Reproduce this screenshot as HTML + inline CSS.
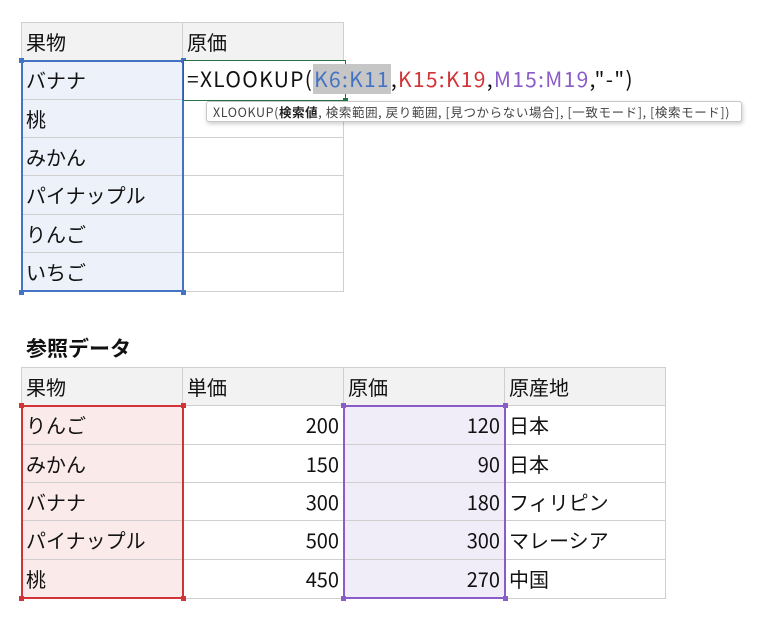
<!DOCTYPE html>
<html><head><meta charset="utf-8"><style>
body{margin:0;width:768px;height:624px;background:#fff;position:relative;overflow:hidden;font-family:"Noto Sans CJK JP","Liberation Sans",sans-serif;color:#111;}
.c{position:absolute;box-sizing:border-box;border-right:1px solid #cfcfcf;border-bottom:1px solid #cfcfcf;font-size:20px;line-height:1;display:flex;align-items:center;padding:0 4px;white-space:nowrap;}
.h{background:#f2f2f2;}
.r{justify-content:flex-end;}
.bl{background:#edf1f9}.rd{background:#fbeaea}.pu{background:#f0edf8}
.sel{position:absolute;box-sizing:border-box;}
.hd{position:absolute;width:5px;height:5px;}
</style></head><body>
<div style="position:absolute;left:21px;top:22px;width:323px;height:1px;background:#cfcfcf"></div>
<div style="position:absolute;left:21px;top:22px;width:1px;height:270px;background:#cfcfcf"></div>
<div class="c h" style="left:22px;top:23px;width:161px;height:38px">果物</div>
<div class="c h" style="left:183px;top:23px;width:161px;height:38px">原価</div>
<div class="c bl" style="left:22px;top:61px;width:161px;height:39px">バナナ</div>
<div class="c" style="left:183px;top:61px;width:161px;height:39px"></div>
<div class="c bl" style="left:22px;top:100px;width:161px;height:38px">桃</div>
<div class="c" style="left:183px;top:100px;width:161px;height:38px"></div>
<div class="c bl" style="left:22px;top:138px;width:161px;height:38px">みかん</div>
<div class="c" style="left:183px;top:138px;width:161px;height:38px"></div>
<div class="c bl" style="left:22px;top:176px;width:161px;height:39px">パイナップル</div>
<div class="c" style="left:183px;top:176px;width:161px;height:39px"></div>
<div class="c bl" style="left:22px;top:215px;width:161px;height:38px">りんご</div>
<div class="c" style="left:183px;top:215px;width:161px;height:38px"></div>
<div class="c bl" style="left:22px;top:253px;width:161px;height:39px">いちご</div>
<div class="c" style="left:183px;top:253px;width:161px;height:39px"></div>
<div class="sel" style="left:21px;top:60px;width:163px;height:232px;border:2px solid #4472c4"></div>
<div class="hd" style="left:19px;top:58px;background:#4472c4"></div>
<div class="hd" style="left:181px;top:58px;background:#4472c4"></div>
<div class="hd" style="left:19px;top:290px;background:#4472c4"></div>
<div class="hd" style="left:181px;top:290px;background:#4472c4"></div>
<div class="sel" style="left:183px;top:60px;width:163px;height:41px;border:1.5px solid #217346;background:#fff"></div>
<div class="hd" style="left:343px;top:98px;background:#217346"></div>
<div style="position:absolute;left:187px;top:63px;font-size:21px;letter-spacing:1.3px;line-height:32px;white-space:nowrap"><span>=XLOOKUP(</span><span style="color:#4472c4;background:#c6c6c6;padding:0 1px">K6:K11</span><span>,</span><span style="color:#d13438">K15:K19</span><span>,</span><span style="color:#8a5cc7">M15:M19</span><span>,"-")</span></div>
<div style="position:absolute;left:206px;top:101px;width:536px;height:21px;box-sizing:border-box;border:1px solid #c8c8c8;border-radius:3px;background:#fff;box-shadow:1px 2px 4px rgba(0,0,0,.2);font-size:12.5px;letter-spacing:0.6px;line-height:19px;padding-left:6px;color:#444;white-space:nowrap">XLOOKUP(<b style="color:#222">検索値</b>, 検索範囲, 戻り範囲, [見つからない場合], [一致モード], [検索モード])</div>
<div style="position:absolute;left:26px;top:333px;font-size:21px;font-weight:bold;line-height:30px">参照データ</div>
<div style="position:absolute;left:21px;top:367px;width:645px;height:1px;background:#cfcfcf"></div>
<div style="position:absolute;left:21px;top:367px;width:1px;height:232px;background:#cfcfcf"></div>
<div class="c h" style="left:22px;top:368px;width:161px;height:38px">果物</div>
<div class="c h" style="left:183px;top:368px;width:161px;height:38px">単価</div>
<div class="c h" style="left:344px;top:368px;width:161px;height:38px">原価</div>
<div class="c h" style="left:505px;top:368px;width:161px;height:38px">原産地</div>
<div class="c rd" style="left:22px;top:406px;width:161px;height:39px">りんご</div>
<div class="c r" style="left:183px;top:406px;width:161px;height:39px">200</div>
<div class="c r pu" style="left:344px;top:406px;width:161px;height:39px">120</div>
<div class="c" style="left:505px;top:406px;width:161px;height:39px">日本</div>
<div class="c rd" style="left:22px;top:445px;width:161px;height:38px">みかん</div>
<div class="c r" style="left:183px;top:445px;width:161px;height:38px">150</div>
<div class="c r pu" style="left:344px;top:445px;width:161px;height:38px">90</div>
<div class="c" style="left:505px;top:445px;width:161px;height:38px">日本</div>
<div class="c rd" style="left:22px;top:483px;width:161px;height:38px">バナナ</div>
<div class="c r" style="left:183px;top:483px;width:161px;height:38px">300</div>
<div class="c r pu" style="left:344px;top:483px;width:161px;height:38px">180</div>
<div class="c" style="left:505px;top:483px;width:161px;height:38px">フィリピン</div>
<div class="c rd" style="left:22px;top:521px;width:161px;height:39px">パイナップル</div>
<div class="c r" style="left:183px;top:521px;width:161px;height:39px">500</div>
<div class="c r pu" style="left:344px;top:521px;width:161px;height:39px">300</div>
<div class="c" style="left:505px;top:521px;width:161px;height:39px">マレーシア</div>
<div class="c rd" style="left:22px;top:560px;width:161px;height:39px">桃</div>
<div class="c r" style="left:183px;top:560px;width:161px;height:39px">450</div>
<div class="c r pu" style="left:344px;top:560px;width:161px;height:39px">270</div>
<div class="c" style="left:505px;top:560px;width:161px;height:39px">中国</div>
<div class="sel" style="left:21px;top:405px;width:163px;height:194px;border:2px solid #d13438"></div>
<div class="hd" style="left:19px;top:403px;background:#d13438"></div>
<div class="hd" style="left:181px;top:403px;background:#d13438"></div>
<div class="hd" style="left:19px;top:596px;background:#d13438"></div>
<div class="hd" style="left:181px;top:596px;background:#d13438"></div>
<div class="sel" style="left:343px;top:405px;width:163px;height:194px;border:2px solid #8a5cc7"></div>
<div class="hd" style="left:341px;top:403px;background:#8a5cc7"></div>
<div class="hd" style="left:503px;top:403px;background:#8a5cc7"></div>
<div class="hd" style="left:341px;top:596px;background:#8a5cc7"></div>
<div class="hd" style="left:503px;top:596px;background:#8a5cc7"></div>
</body></html>
